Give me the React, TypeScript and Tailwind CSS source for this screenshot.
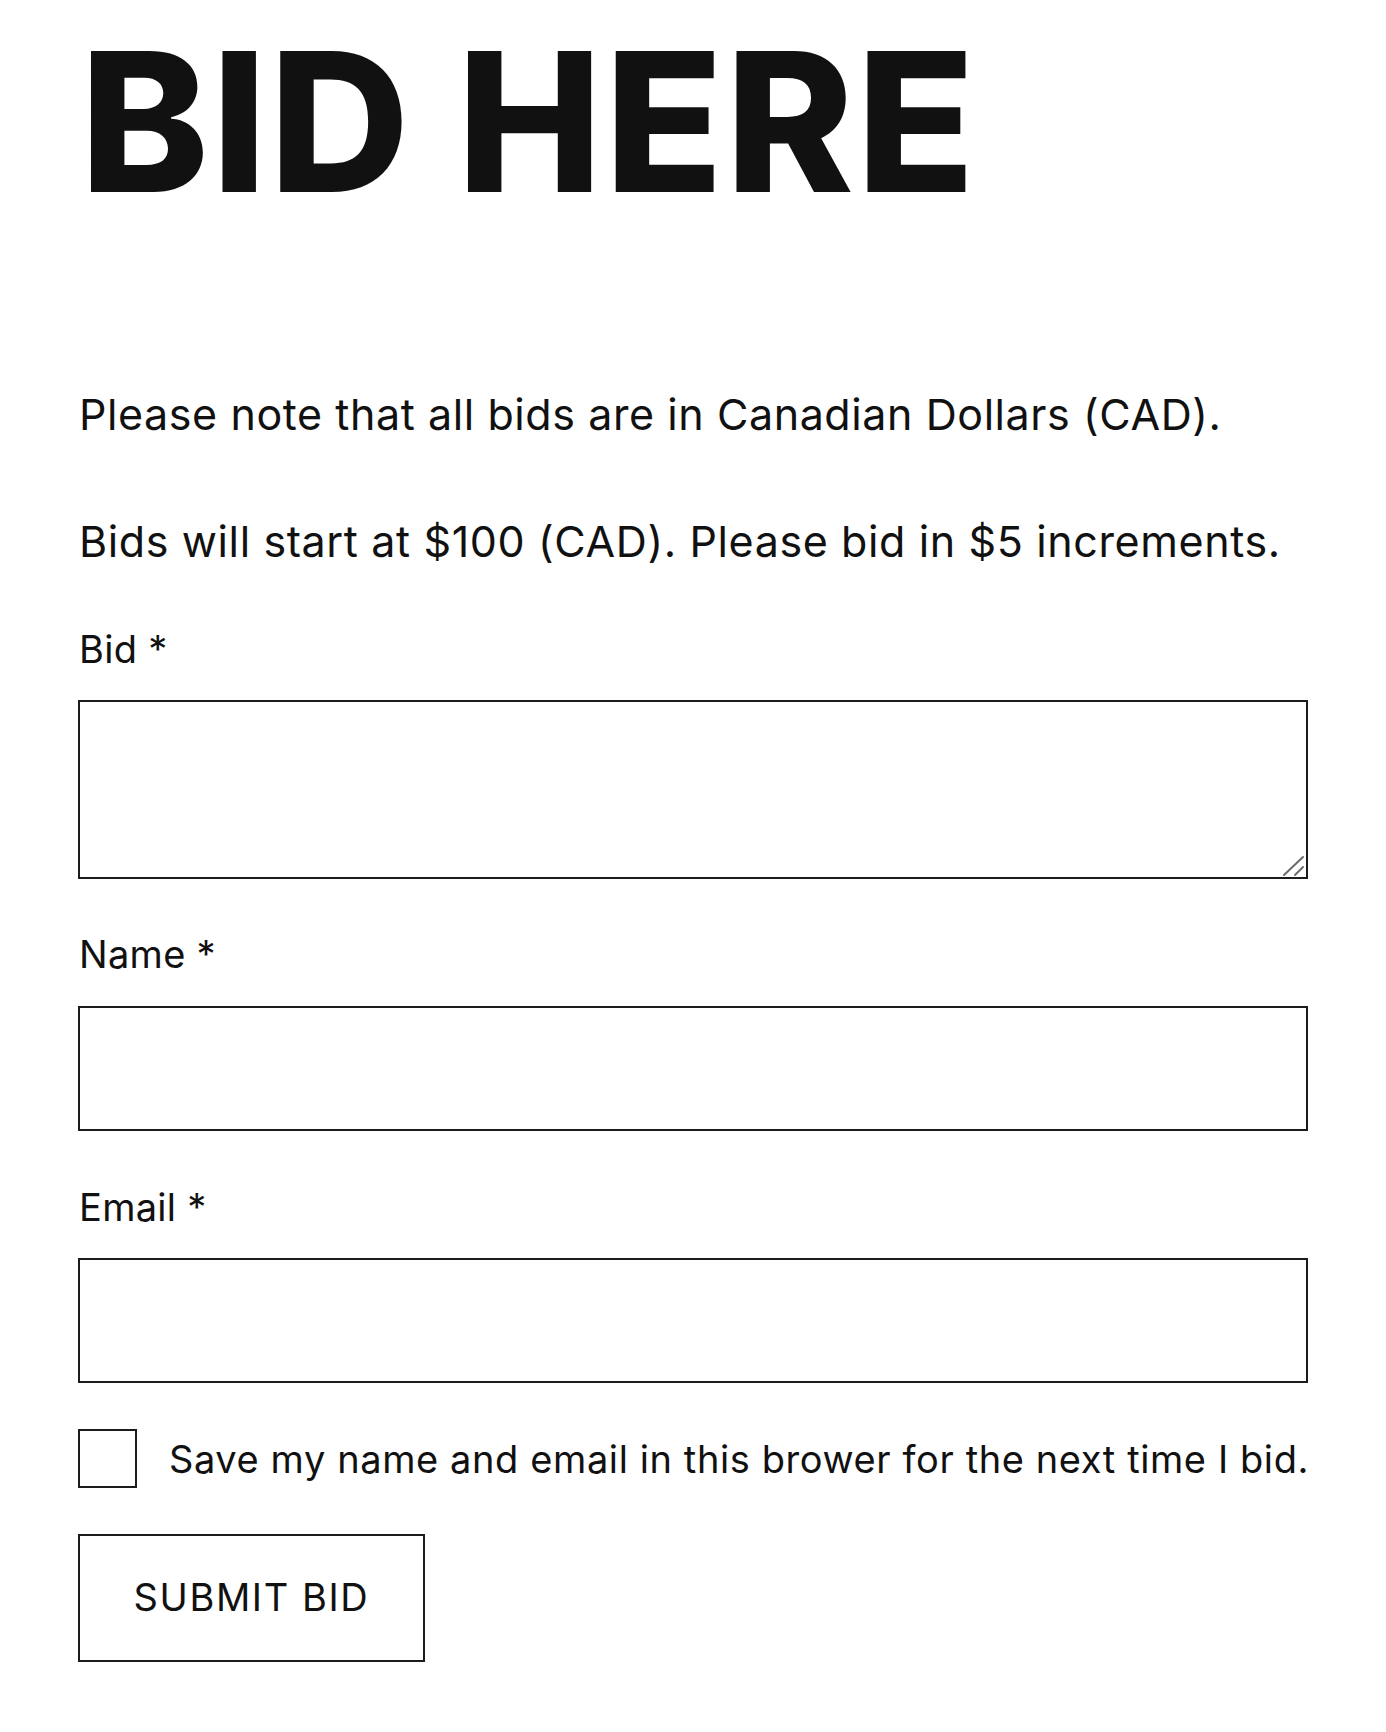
import React from "react";

export default function App() {
  const font = { fontFamily: "Inter, 'Noto Sans', sans-serif" };
  return (
    <div className="min-h-[1732px] w-[1386px] bg-white text-[#111111]" style={font}>
      <div className="flex w-[1230px] flex-col pl-[78px] box-content">
        <h1 className="mt-[25px] text-[194px] font-extrabold leading-[194px] tracking-[2.5px] pl-[2px]">
          BID HERE
        </h1>
        <p className="mt-[169px] text-[43px] leading-[52px] tracking-[0.58px] pl-[1px]">
          Please note that all bids are in Canadian Dollars (CAD).
        </p>
        <p className="mt-[75px] text-[43px] leading-[52px] tracking-[0.62px] pl-[1px]">
          Bids will start at $100 (CAD). Please bid in $5 increments.
        </p>
        <label className="mt-[59px] text-[38px] leading-[46px] tracking-[0.3px] pl-[1px]">Bid *</label>
        <div className="relative mt-[28px] h-[179px] w-full">
          <textarea className="box-border block h-[179px] w-full resize-none border-2 border-[#1c1c1c] bg-white outline-none" />
          <svg
            className="pointer-events-none absolute bottom-[2px] right-[3px]"
            width="23"
            height="22"
            viewBox="0 0 23 22"
          >
            <line x1="2" y1="20" x2="21" y2="2" stroke="#6b6b6b" strokeWidth="2" strokeLinecap="round" />
            <line x1="13" y1="20" x2="21" y2="12" stroke="#6b6b6b" strokeWidth="2" strokeLinecap="round" />
          </svg>
        </div>
        <label className="mt-[52px] text-[38px] leading-[46px] tracking-[0.3px] pl-[1px]">Name *</label>
        <input
          type="text"
          className="mt-[29px] box-border h-[125px] w-full border-2 border-[#1c1c1c] bg-white outline-none"
        />
        <label className="mt-[53px] text-[38px] leading-[46px] tracking-[0.3px] pl-[1px]">Email *</label>
        <input
          type="email"
          className="mt-[28px] box-border h-[125px] w-full border-2 border-[#1c1c1c] bg-white outline-none"
        />
        <div className="mt-[46px] flex items-start gap-[32px]">
          <input
            type="checkbox"
            className="box-border h-[59px] w-[59px] shrink-0 appearance-none border-2 border-[#1c1c1c] bg-white"
          />
          <span className="mt-[7px] whitespace-nowrap text-[38px] leading-[46px] tracking-[0.6px]">
            Save my name and email in this brower for the next time I bid.
          </span>
        </div>
        <div className="mt-[46px]">
          <button className="box-border flex h-[128px] w-[347px] items-center justify-center border-2 border-[#1c1c1c] bg-white pb-[3px] text-[38px] leading-[46px] tracking-[1.6px]">
            SUBMIT BID
          </button>
        </div>
      </div>
    </div>
  );
}
